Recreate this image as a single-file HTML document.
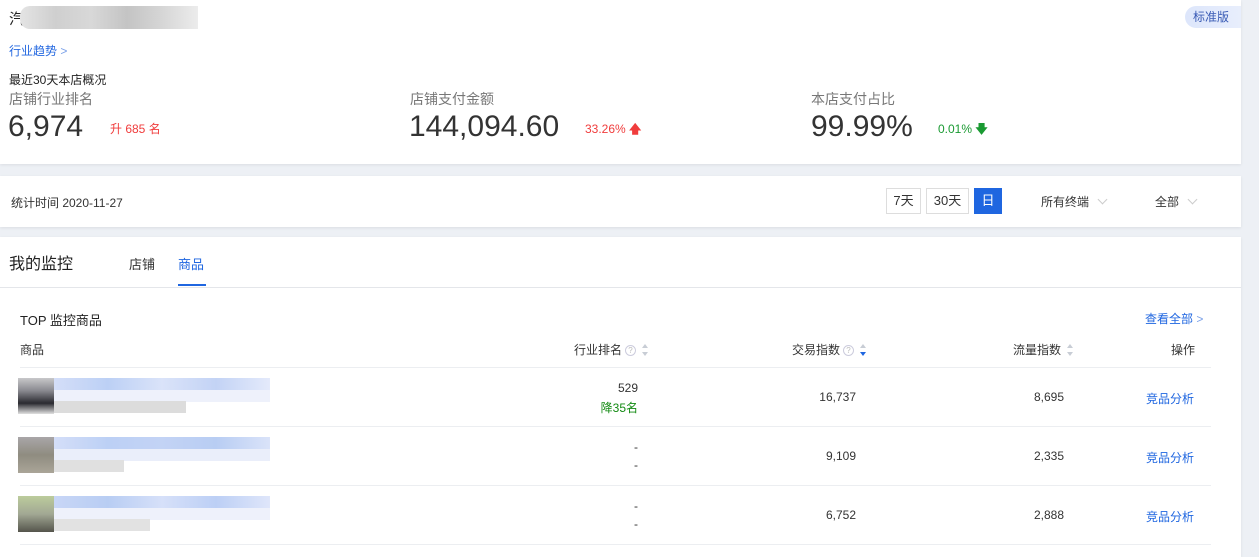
<!DOCTYPE html>
<html><head><meta charset="utf-8"><style>
*{margin:0;padding:0;box-sizing:border-box}
body{width:1259px;height:548px;background:#edf0f5;font-family:"Liberation Sans","Noto Sans CJK SC",sans-serif;position:relative;overflow:hidden;color:#333}
.a{position:absolute;white-space:nowrap}
.card{position:absolute;background:#fff;left:0;width:1241px;box-shadow:0 1px 3px rgba(0,0,0,.08)}
.btn{position:absolute;top:188px;height:26px;border:1px solid #ddd;font-size:13px;line-height:24px;text-align:center;background:#fff}
.chev{display:inline-block;width:7px;height:7px;border-right:1px solid #ccc;border-bottom:1px solid #ccc;transform:rotate(45deg);margin-left:10px;position:relative;top:-3px}
.sort{display:inline-block;vertical-align:middle;margin-left:6px;width:7px;height:12px;position:relative;top:-1px}
.sort:before{content:"";position:absolute;top:0;left:0;border:3.5px solid transparent;border-bottom:4px solid #c8cdd5;border-top:0}
.sort:after{content:"";position:absolute;bottom:0;left:0;border:3.5px solid transparent;border-top:4px solid #c8cdd5;border-bottom:0}
.sort.d:after{border-top-color:#1f66e0}
.q{display:inline-block;width:11px;height:11px;border:1px solid #ccd;border-radius:50%;font-size:8px;line-height:9px;text-align:center;color:#bbb;vertical-align:middle;margin-left:3px}
.hr{position:absolute;left:20px;width:1191px;height:1px;background:#eceef1}
.td{font-size:12px;color:#333;text-align:right}
.img{position:absolute;left:18px;width:36px;height:36px}
.bl{position:absolute;left:54px;height:12px}
</style></head><body>
<div class="card" style="top:0;height:164px"></div>
<div class="a" style="left:9px;top:8px;font-size:15px;color:#222">汽</div>
<div class="a" style="left:20px;top:6px;width:178px;height:23px;background:linear-gradient(90deg,#e4e4e4,#cfcfcf,#d8d8d8,#c4c4c4,#d6d6d6,#ececec);border-radius:10px 0 0 10px"></div>
<div class="a" style="left:1185px;top:6px;width:56px;height:22px;border-radius:11px 0 0 11px;background:linear-gradient(90deg,#dde6fb,#e8eefc);color:#3a5bb5;font-size:12px;line-height:22px;padding-left:8px">标准版</div>
<div class="a" style="left:9px;top:42px;font-size:12px;color:#2468e0">行业趋势 <span style="color:#7aa0e8">&gt;</span></div>
<div class="a" style="left:9px;top:71px;font-size:12px;color:#222">最近30天本店概况</div>
<div class="a" style="left:9px;top:89px;font-size:14px;color:#777">店铺行业排名</div>
<div class="a" style="left:8px;top:110px;font-size:30px;color:#333">6,974</div>
<div class="a" style="left:110px;top:120px;font-size:12px;color:#f03c3c">升 685 名</div>
<div class="a" style="left:410px;top:89px;font-size:14px;color:#777">店铺支付金额</div>
<div class="a" style="left:409px;top:110px;font-size:30px;color:#333">144,094.60</div>
<div class="a" style="left:585px;top:120px;font-size:12px;color:#f03c3c">33.26% <b>🡅</b></div>
<div class="a" style="left:811px;top:89px;font-size:14px;color:#777">本店支付占比</div>
<div class="a" style="left:811px;top:110px;font-size:30px;color:#333">99.99%</div>
<div class="a" style="left:938px;top:120px;font-size:12px;color:#1a9a32">0.01% <b>🡇</b></div>

<div class="card" style="top:176px;height:51px"></div>
<div class="a" style="left:11px;top:194px;font-size:12px;color:#333">统计时间 2020-11-27</div>
<div class="btn" style="left:886px;width:35px">7天</div>
<div class="btn" style="left:926px;width:43px">30天</div>
<div class="btn" style="left:974px;width:28px;background:#1f66e0;border-color:#1f66e0;color:#fff">日</div>
<div class="a" style="left:1041px;top:193px;font-size:12px;color:#333">所有终端<span class="chev"></span></div>
<div class="a" style="left:1155px;top:193px;font-size:12px;color:#333">全部<span class="chev"></span></div>

<div class="card" style="top:237px;height:320px"></div>
<div class="a" style="left:9px;top:250px;font-size:16px;color:#222">我的监控</div>
<div class="a" style="left:129px;top:254px;font-size:13px;color:#333">店铺</div>
<div class="a" style="left:178px;top:254px;font-size:13px;color:#1f66e0">商品</div>
<div class="a" style="left:178px;top:284px;width:28px;height:2px;background:#1f66e0"></div>
<div class="a" style="left:0;top:287px;width:1241px;height:1px;background:#e4e6ea"></div>
<div class="a" style="left:20px;top:310px;font-size:13px;color:#222">TOP 监控商品</div>
<div class="a" style="left:1145px;top:310px;font-size:12px;color:#1f66e0">查看全部 <span style="color:#7aa0e8">&gt;</span></div>
<div class="a" style="left:20px;top:341px;font-size:12px;color:#333">商品</div>
<div class="a" style="left:574px;top:341px;font-size:12px;color:#333">行业排名<span class="q">?</span><span class="sort"></span></div>
<div class="a" style="left:792px;top:341px;font-size:12px;color:#333">交易指数<span class="q">?</span><span class="sort d"></span></div>
<div class="a" style="left:1013px;top:341px;font-size:12px;color:#333">流量指数<span class="sort"></span></div>
<div class="a" style="left:1171px;top:341px;font-size:12px;color:#333">操作</div>
<div class="hr" style="top:367px"></div>
<div class="hr" style="top:426px"></div>
<div class="hr" style="top:485px"></div>
<div class="hr" style="top:544px"></div>

<div class="img" style="top:378px;background:linear-gradient(180deg,#c8c8ca 0,#8a8a90 35%,#2a2a30 70%,#e0e0e0 100%)"></div>
<div class="bl" style="top:378px;width:216px;background:linear-gradient(90deg,#d4def8,#bcd0f5,#dae3f9,#c3d3f5,#e4eafb)"></div>
<div class="bl" style="top:390px;width:216px;background:#eef1fb"></div>
<div class="bl" style="top:401px;width:132px;background:#dcdcdc"></div>
<div class="a td" style="left:560px;width:78px;top:381px">529</div>
<div class="a td" style="left:560px;width:78px;top:399px;color:#128a12">降35名</div>
<div class="a td" style="left:760px;width:96px;top:390px">16,737</div>
<div class="a td" style="left:980px;width:84px;top:390px">8,695</div>
<div class="a" style="left:1146px;top:390px;font-size:12px;color:#1f66e0">竞品分析</div>

<div class="img" style="top:437px;background:linear-gradient(180deg,#a9a6a8 0,#8f8c80 50%,#aaa598 100%)"></div>
<div class="bl" style="top:437px;width:216px;background:linear-gradient(90deg,#d4def8,#bcd0f5,#c3d3f5,#b8cdf3,#dae3f9)"></div>
<div class="bl" style="top:449px;width:216px;background:#eaeefa"></div>
<div class="bl" style="top:460px;width:70px;background:#e0e0e0"></div>
<div class="a td" style="left:560px;width:78px;top:440px">-</div>
<div class="a td" style="left:560px;width:78px;top:458px">-</div>
<div class="a td" style="left:760px;width:96px;top:449px">9,109</div>
<div class="a td" style="left:980px;width:84px;top:449px">2,335</div>
<div class="a" style="left:1146px;top:449px;font-size:12px;color:#1f66e0">竞品分析</div>

<div class="img" style="top:496px;background:linear-gradient(180deg,#bccc9c 0,#a2a894 50%,#55554c 100%)"></div>
<div class="bl" style="top:496px;width:216px;background:linear-gradient(90deg,#c8d6f6,#b8cdf3,#d6e0f9,#bccff5,#dfe6fa)"></div>
<div class="bl" style="top:508px;width:216px;background:#eef1fb"></div>
<div class="bl" style="top:519px;width:96px;background:#e2e2e2"></div>
<div class="a td" style="left:560px;width:78px;top:499px">-</div>
<div class="a td" style="left:560px;width:78px;top:517px">-</div>
<div class="a td" style="left:760px;width:96px;top:508px">6,752</div>
<div class="a td" style="left:980px;width:84px;top:508px">2,888</div>
<div class="a" style="left:1146px;top:508px;font-size:12px;color:#1f66e0">竞品分析</div>
</body></html>
